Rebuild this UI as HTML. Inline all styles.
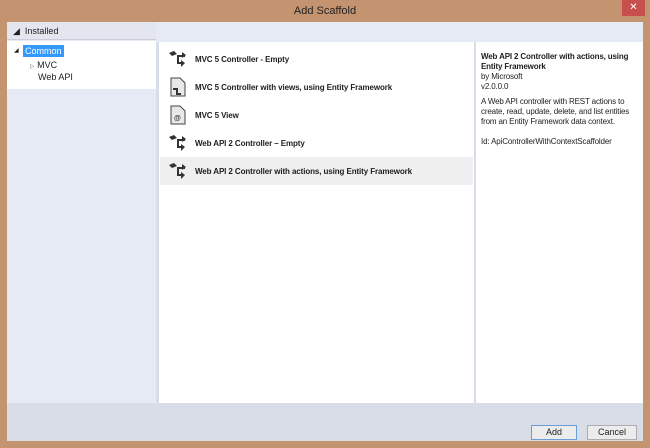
<!DOCTYPE html>
<html><head><style>
*{margin:0;padding:0;box-sizing:border-box}
body{width:650px;height:448px;background:#c4936f;font-family:"Liberation Sans",sans-serif;font-size:9px;color:#1e1e1e;position:relative;overflow:hidden}
.abs{position:absolute}
.title{left:0;top:0;width:650px;height:22px;text-align:center;line-height:22px;font-size:11px;color:#222}
.close{left:622px;top:0px;width:23px;height:16px;background:#c7504f;color:#fff;text-align:center;line-height:15px;font-size:10px}
.client{left:7px;top:22px;width:636px;height:419px;background:#d8dde8}
.row{height:28px;display:flex;align-items:center;font-weight:bold;font-size:8px;letter-spacing:-0.1px}
.row svg{margin-left:8px;margin-right:6px}
</style></head><body>
<div class="abs title">Add Scaffold</div>
<div class="abs close">✕</div>
<div class="abs client"></div>
<div class="abs" style="left:7px;top:22px;width:149px;height:381px;background:#e6eaf4"></div>
<div class="abs" style="left:7px;top:22px;width:149px;height:18px;background:#e3e6ee;border-bottom:1px solid #ccd;line-height:18px;padding-left:6px">◢&nbsp; Installed</div>
<div class="abs" style="left:7px;top:41px;width:149px;height:48px;background:#fff"></div>
<div class="abs" style="left:14px;top:47px;font-size:6px">◢</div>
<div class="abs" style="left:23px;top:45px;background:#3399ff;color:#fff;padding:1px 2px;font-size:9px">Common</div>
<div class="abs" style="left:30px;top:60px;font-size:9px"><span style="font-size:6px;color:#666">▷</span>&nbsp;MVC</div>
<div class="abs" style="left:38px;top:72px;font-size:9px">Web API</div>
<div class="abs" style="left:156px;top:22px;width:487px;height:20px;background:#e6eaf4"></div>
<div class="abs" style="left:159px;top:42px;width:315px;height:361px;background:#fff;padding-top:3px">
 <div class="row"><svg width="22" height="20"><g fill="#333"><path d="M2 4l5-2 3 3-5 2z"/><rect x="10" y="6" width="2" height="9"/><rect x="10" y="6" width="8" height="2"/><path d="M15 3l4 3-4 3z"/><rect x="10" y="13" width="6" height="2"/><path d="M14 11l4 3-4 4z"/></g></svg>MVC 5 Controller - Empty</div>
 <div class="row"><svg width="22" height="20"><path d="M4 1h9l5 5v13H4z" fill="#e8e8e8" stroke="#444"/><g fill="#333"><rect x="6" y="11" width="4" height="2"/><rect x="9" y="11" width="2" height="7"/><rect x="9" y="16" width="5" height="2"/></g></svg>MVC 5 Controller with views, using Entity Framework</div>
 <div class="row"><svg width="22" height="20"><path d="M4 1h9l5 5v13H4z" fill="#e8e8e8" stroke="#444"/><text x="7" y="15" font-size="7" fill="#333" font-family="Liberation Sans">@</text></svg>MVC 5 View</div>
 <div class="row"><svg width="22" height="20"><g fill="#333"><path d="M2 4l5-2 3 3-5 2z"/><rect x="10" y="6" width="2" height="9"/><rect x="10" y="6" width="8" height="2"/><path d="M15 3l4 3-4 3z"/><rect x="10" y="13" width="6" height="2"/><path d="M14 11l4 3-4 4z"/></g></svg>Web API 2 Controller – Empty</div>
 <div class="row" style="background:#efefef;margin-left:1px;width:313px"><svg width="22" height="20" style="margin-left:7px"><g fill="#333"><path d="M2 4l5-2 3 3-5 2z"/><rect x="10" y="6" width="2" height="9"/><rect x="10" y="6" width="8" height="2"/><path d="M15 3l4 3-4 3z"/><rect x="10" y="13" width="6" height="2"/><path d="M14 11l4 3-4 4z"/></g></svg>Web API 2 Controller with actions, using Entity Framework</div>
</div>
<div class="abs" style="left:476px;top:42px;width:167px;height:361px;background:#fff;padding:10px 4px 0 5px;font-size:8px;line-height:10px;letter-spacing:-0.15px">
<b>Web API 2 Controller with actions, using Entity Framework</b><br>by Microsoft<br>v2.0.0.0
<div style="margin-top:5px">A Web API controller with REST actions to create, read, update, delete, and list entities from an Entity Framework data context.</div>
<div style="margin-top:10px">Id: ApiControllerWithContextScaffolder</div>
</div>
<div class="abs" style="left:531px;top:425px;width:46px;height:15px;background:#ececec;border:1px solid #6a9ed6;text-align:center;line-height:13px">Add</div>
<div class="abs" style="left:587px;top:425px;width:50px;height:15px;background:#ececec;border:1px solid #adadad;text-align:center;line-height:13px">Cancel</div>
</body></html>
